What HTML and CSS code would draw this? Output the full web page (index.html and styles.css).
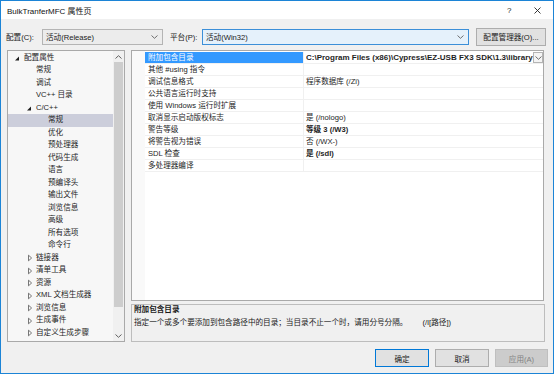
FILE: index.html
```html
<!DOCTYPE html>
<html lang="zh-CN">
<head>
<meta charset="utf-8">
<title>BulkTranferMFC 属性页</title>
<link rel="stylesheet" href="styles.css">
</head>
<body>
<div class="win">
  <div class="titlebar">
    <span class="title">BulkTranferMFC 属性页</span>
    <span class="help">?</span>
    <span class="close"><svg width="7" height="7" viewBox="0 0 7 7"><path d="M0.5 0.5L6.5 6.5M6.5 0.5L0.5 6.5" stroke="#222" stroke-width="0.9" fill="none"/></svg></span>
  </div>
  <div class="body">
    <div class="configrow">
      <span class="lbl lbl1">配置(C):</span>
      <div class="combo combo1"><span class="ctext">活动(Release)</span><svg class="chev" width="7" height="4" viewBox="0 0 7 4"><path d="M0.5 0.5L3.5 3.3L6.5 0.5" stroke="#606060" stroke-width="0.9" fill="none"/></svg></div>
      <span class="lbl lbl2">平台(P):</span>
      <div class="combo combo2"><span class="ctext">活动(Win32)</span><svg class="chev" width="7" height="4" viewBox="0 0 7 4"><path d="M0.5 0.5L3.5 3.3L6.5 0.5" stroke="#606060" stroke-width="0.9" fill="none"/></svg></div>
      <div class="btn btn-mgr">配置管理器(O)...</div>
    </div>
    <div class="main">
      <div class="tree">
        <div class="tree-list">
          <div class="ti l0"><span class="exp"><svg width="10" height="8" viewBox="0 0 10 8"><path d="M5 2.5L5 6.5L1 6.5Z" fill="#1e1e1e"/></svg></span>配置属性</div>
          <div class="ti l1"><span class="exp"></span>常规</div>
          <div class="ti l1"><span class="exp"></span>调试</div>
          <div class="ti l1"><span class="exp"></span>VC++ 目录</div>
          <div class="ti l1"><span class="exp"><svg width="10" height="8" viewBox="0 0 10 8"><path d="M5 2.5L5 6.5L1 6.5Z" fill="#1e1e1e"/></svg></span>C/C++</div>
          <div class="ti l2 sel"><span class="exp"></span>常规</div>
          <div class="ti l2"><span class="exp"></span>优化</div>
          <div class="ti l2"><span class="exp"></span>预处理器</div>
          <div class="ti l2"><span class="exp"></span>代码生成</div>
          <div class="ti l2"><span class="exp"></span>语言</div>
          <div class="ti l2"><span class="exp"></span>预编译头</div>
          <div class="ti l2"><span class="exp"></span>输出文件</div>
          <div class="ti l2"><span class="exp"></span>浏览信息</div>
          <div class="ti l2"><span class="exp"></span>高级</div>
          <div class="ti l2"><span class="exp"></span>所有选项</div>
          <div class="ti l2"><span class="exp"></span>命令行</div>
          <div class="ti l1"><span class="exp"><svg width="10" height="8" viewBox="0 0 10 8"><path d="M2.5 1.2L5.6 4L2.5 6.8Z" fill="none" stroke="#555" stroke-width="0.8"/></svg></span>链接器</div>
          <div class="ti l1"><span class="exp"><svg width="10" height="8" viewBox="0 0 10 8"><path d="M2.5 1.2L5.6 4L2.5 6.8Z" fill="none" stroke="#555" stroke-width="0.8"/></svg></span>清单工具</div>
          <div class="ti l1"><span class="exp"><svg width="10" height="8" viewBox="0 0 10 8"><path d="M2.5 1.2L5.6 4L2.5 6.8Z" fill="none" stroke="#555" stroke-width="0.8"/></svg></span>资源</div>
          <div class="ti l1"><span class="exp"><svg width="10" height="8" viewBox="0 0 10 8"><path d="M2.5 1.2L5.6 4L2.5 6.8Z" fill="none" stroke="#555" stroke-width="0.8"/></svg></span>XML 文档生成器</div>
          <div class="ti l1"><span class="exp"><svg width="10" height="8" viewBox="0 0 10 8"><path d="M2.5 1.2L5.6 4L2.5 6.8Z" fill="none" stroke="#555" stroke-width="0.8"/></svg></span>浏览信息</div>
          <div class="ti l1"><span class="exp"><svg width="10" height="8" viewBox="0 0 10 8"><path d="M2.5 1.2L5.6 4L2.5 6.8Z" fill="none" stroke="#555" stroke-width="0.8"/></svg></span>生成事件</div>
          <div class="ti l1"><span class="exp"><svg width="10" height="8" viewBox="0 0 10 8"><path d="M2.5 1.2L5.6 4L2.5 6.8Z" fill="none" stroke="#555" stroke-width="0.8"/></svg></span>自定义生成步骤</div>
        </div>
        <div class="vscroll">
          <div class="sarrow"><svg width="7" height="4" viewBox="0 0 7 4"><path d="M0.5 3.5L3.5 0.7L6.5 3.5" stroke="#606060" stroke-width="1" fill="none"/></svg></div>
          <div class="thumb"></div>
          <div class="track"></div>
          <div class="sarrow"><svg width="7" height="4" viewBox="0 0 7 4"><path d="M0.5 0.5L3.5 3.3L6.5 0.5" stroke="#606060" stroke-width="1" fill="none"/></svg></div>
        </div>
      </div>
      <div class="right">
        <div class="grid">
          <div class="gutter"></div>
          <div class="rows">
            <div class="row"><div class="name selname">附加包含目录</div><div class="val bold first"><span class="vtext">C:\Program Files (x86)\Cypress\EZ-USB FX3 SDK\1.3\library</span><span class="ddbtn"><svg width="7" height="4" viewBox="0 0 7 4"><path d="M0.5 0.5L3.5 3.3L6.5 0.5" stroke="#606060" stroke-width="0.9" fill="none"/></svg></span></div></div>
            <div class="row"><div class="name">其他 #using 指令</div><div class="val"></div></div>
            <div class="row"><div class="name">调试信息格式</div><div class="val">程序数据库 (/Zi)</div></div>
            <div class="row"><div class="name">公共语言运行时支持</div><div class="val"></div></div>
            <div class="row"><div class="name">使用 Windows 运行时扩展</div><div class="val"></div></div>
            <div class="row"><div class="name">取消显示启动版权标志</div><div class="val">是 (/nologo)</div></div>
            <div class="row"><div class="name">警告等级</div><div class="val bold">等级 3 (/W3)</div></div>
            <div class="row"><div class="name">将警告视为错误</div><div class="val">否 (/WX-)</div></div>
            <div class="row"><div class="name">SDL 检查</div><div class="val bold">是 (/sdl)</div></div>
            <div class="row"><div class="name">多处理器编译</div><div class="val"></div></div>
          </div>
        </div>
        <div class="desc">
          <div class="dtitle">附加包含目录</div>
          <div class="dtext">指定一个或多个要添加到包含路径中的目录；当目录不止一个时，请用分号分隔。<span class="dswitch">(/I[路径])</span></div>
        </div>
      </div>
    </div>
    <div class="footer">
      <div class="btn fbtn default">确定</div>
      <div class="btn fbtn">取消</div>
      <div class="btn fbtn disabled">应用(A)</div>
    </div>
  </div>
</div>
</body>
</html>
```
FILE: styles.css
```css
* { box-sizing: border-box; }
html, body { margin: 0; padding: 0; }
body {
  width: 554px;
  height: 374px;
  overflow: hidden;
  font-family: "Liberation Sans", "Noto Sans CJK SC", sans-serif;
  font-size: 7.6px;
  color: #1a1a1a;
  background: #f0f0f0;
}
.win {
  width: 554px;
  height: 374px;
  border: 1px solid #1c84d6;
  display: flex;
  flex-direction: column;
  background: #f0f0f0;
}
.titlebar {
  height: 18px;
  background: #ffffff;
  display: flex;
  align-items: center;
  padding-left: 6px;
  flex-shrink: 0;
}
.title { flex: 1; font-size: 8px; color: #111; }
.help { width: 8px; margin-right: 19px; font-size: 8px; color: #222; }
.close { width: 7px; height: 7px; margin-right: 12px; display: flex; }
.body {
  flex: 1;
  display: flex;
  flex-direction: column;
  padding: 9px 7px 0 5px;
}
.configrow {
  height: 17px;
  display: flex;
  align-items: center;
}
.lbl { white-space: nowrap; flex-shrink: 0; }
.lbl1 { width: 36px; }
.lbl2 { width: 32px; margin-left: 7px; }
.combo {
  height: 16px;
  border: 1px solid #b4b4b4;
  background: #ececec;
  display: flex;
  align-items: center;
  padding: 0 4px 0 3px;
  flex-shrink: 0;
}
.combo1 { width: 121px; }
.combo2 { width: 267px; background: #e5f1fb; border-color: #3c8fd8; }
.ctext { flex: 1; white-space: nowrap; }
.chev { display: block; }
.btn {
  border: 1px solid #adadad;
  background: #e1e1e1;
  display: flex;
  align-items: center;
  justify-content: center;
  white-space: nowrap;
  flex-shrink: 0;
}
.btn-mgr { width: 70px; height: 18px; margin-left: 7px; }
.main {
  margin-top: 5px;
  height: 292px;
  display: flex;
  flex-shrink: 0;
}
.tree {
  width: 118px;
  margin-left: 1px;
  border: 1px solid #a9a9a9;
  background: #f7f7f7;
  display: flex;
  flex-shrink: 0;
}
.tree-list {
  width: 105px;
  padding-top: 0.75px;
  flex-shrink: 0;
}
.ti {
  height: 12.5px;
  line-height: 12.5px;
  display: flex;
  align-items: center;
  white-space: nowrap;
  color: #1e1e1e;
}
.ti.l0 { padding-left: 6px; }
.ti.l1 { padding-left: 18px; }
.ti.l2 { padding-left: 30px; }
.ti.sel { background: #cccedb; }
.exp { width: 10px; height: 8px; display: flex; flex-shrink: 0; }
.exp svg { display: block; }
.vscroll {
  width: 11px;
  background: #f0f0f0;
  display: flex;
  flex-direction: column;
  flex-shrink: 0;
}
.sarrow { height: 11px; display: flex; align-items: center; justify-content: center; }
.thumb { height: 245px; margin: 0 1px; background: #cdcdcd; }
.track { flex: 1; }
.right {
  margin-left: 6px;
  width: 414px;
  min-width: 0;
  display: flex;
  flex-direction: column;
  flex-shrink: 0;
}
.grid {
  width: 413px;
  height: 251px;
  border: 1px solid #a9a9a9;
  background: #ffffff;
  display: flex;
}
.gutter { width: 13px; flex-shrink: 0; background: #f9f9f9; }
.rows { flex: 1; min-width: 0; padding-top: 1px; }
.row {
  height: 12px;
  display: flex;
  border-bottom: 1px solid #f0f0f0;
}
.name {
  width: 159px;
  flex-shrink: 0;
  padding-left: 3px;
  line-height: 11px;
  white-space: nowrap;
  border-right: 1px solid #f0f0f0;
  color: #1e1e1e;
}
.name.selname { background: #3399ff; color: #ffffff; }
.val {
  flex: 1;
  min-width: 0;
  padding-left: 2px;
  line-height: 11px;
  white-space: nowrap;
  overflow: hidden;
  color: #1e1e1e;
}
.bold { font-weight: bold; }
.val.first { display: flex; padding-right: 0; font-size: 8px; }
.vtext { flex: 1; min-width: 0; overflow: hidden; }
.ddbtn {
  width: 10px;
  height: 11px;
  border: 1px solid #b4b4b4;
  background: #f4f4f4;
  display: flex;
  align-items: center;
  justify-content: center;
  flex-shrink: 0;
}
.desc {
  margin-top: 3px;
  height: 38px;
  border: 1px solid #bdbdbd;
  background: #f0f0f0;
  padding-left: 2px;
}
.dtitle { font-weight: bold; line-height: 10px; }
.dtext { line-height: 16px; white-space: nowrap; }
.dswitch { margin-left: 15px; }
.footer {
  margin-top: 7px;
  margin-right: -2px;
  height: 18px;
  display: flex;
  justify-content: flex-end;
  gap: 6px;
}
.fbtn { width: 54px; height: 18px; }
.fbtn.default { border-color: #0078d7; }
.fbtn.disabled { width: 53px; background: #cccccc; border-color: #bfbfbf; color: #838383; }
```
